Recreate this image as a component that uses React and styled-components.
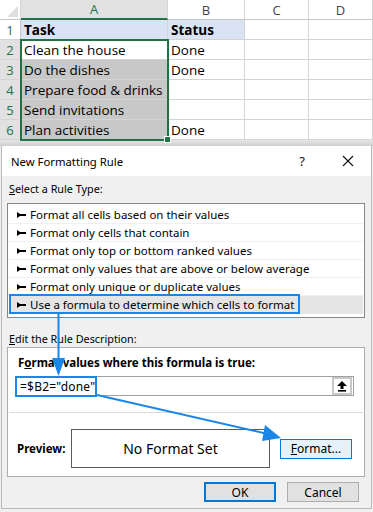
import React from "react";
import styled, { createGlobalStyle } from "styled-components";

const Global = createGlobalStyle`
  html, body { margin: 0; padding: 0; background: #fff; }
  * { box-sizing: border-box; }
`;

const Page = styled.div`
  position: relative;
  width: 373px;
  height: 512px;
  overflow: hidden;
  background: #f0f0f0;
  font-family: "Noto Sans", "Open Sans", sans-serif;
`;

/* ---------- Spreadsheet ---------- */
const Sheet = styled.div`
  position: relative;
  display: grid;
  grid-template-columns: 21px 147px 77px 64px 64px;
  grid-auto-rows: 20px;
  background: #fff;
  font-family: "Open Sans", "Noto Sans", sans-serif;
`;

const ColHead = styled.div`
  display: flex;
  align-items: center;
  justify-content: center;
  font-size: 13px;
  color: ${(p) => (p.$active ? "#217346" : "#444")};
  background: ${(p) => (p.$active ? "#e1e1e1" : "#fff")};
  border-right: 1px solid #d4d4d4;
  border-bottom: ${(p) => (p.$active ? "2px solid #217346" : "1px solid #c6c6c6")};
`;

const Corner = styled.div`
  position: relative;
  background: #fff;
  border-right: 1px solid #d4d4d4;
  border-bottom: 1px solid #c6c6c6;
  &::after {
    content: "";
    position: absolute;
    right: 2px;
    bottom: 2px;
    border-style: solid;
    border-width: 0 0 11px 11px;
    border-color: transparent transparent #dfdfdf transparent;
  }
`;

const RowHead = styled.div`
  display: flex;
  align-items: center;
  justify-content: center;
  font-size: 13px;
  color: #217346;
  background: ${(p) => (p.$active ? "#e1e1e1" : "#fff")};
  border-right: 1px solid #c6c6c6;
  border-bottom: 1px solid #d4d4d4;
`;

const Cell = styled.div`
  display: flex;
  align-items: center;
  padding-left: 3px;
  font-size: 13.5px;
  color: #000;
  white-space: nowrap;
  font-weight: ${(p) => (p.$bold ? 700 : 400)};
  background: ${(p) => p.$bg || "#fff"};
  border-right: 1px solid #d4d4d4;
  border-bottom: 1px solid #d4d4d4;
`;

const Selection = styled.div`
  position: absolute;
  left: 20px;
  top: 39px;
  width: 149px;
  height: 102px;
  border: 2px solid #217346;
  pointer-events: none;
  &::after {
    content: "";
    position: absolute;
    right: -4px;
    bottom: -4px;
    width: 5px;
    height: 5px;
    background: #217346;
    border: 1px solid #fff;
  }
`;

const SheetShadow = styled.div`
  height: 6px;
  background: linear-gradient(#e6e6e6, #cfcfcf);
`;

/* ---------- Dialog ---------- */
const Dialog = styled.div`
  height: 363px;
  margin: 0 1px;
  border-left: 1px solid #b9b9b9;
  border-right: 1px solid #b9b9b9;
  border-bottom: 1px solid #b9b9b9;
  background: #f0f0f0;
  display: flex;
  flex-direction: column;
  font-family: "Noto Sans", "Open Sans", sans-serif;
  font-size: 11.5px;
  color: #000;
`;

const TitleBar = styled.div`
  height: 30px;
  background: #fff;
  display: flex;
  align-items: center;
  padding-left: 9px;
  font-size: 11.3px;
`;

const TitleText = styled.div`
  flex: 1;
`;

const TitleBtn = styled.div`
  width: 46px;
  height: 30px;
  display: flex;
  align-items: center;
  justify-content: center;
  font-size: 13px;
  color: #111;
`;

const Body = styled.div`
  padding: 0 6px 0 5px;
  display: flex;
  flex-direction: column;
`;

const SectionLabel = styled.div`
  height: 16px;
  line-height: 16px;
  font-size: 10.8px;
  margin-top: ${(p) => p.$mt || 0}px;
  padding-left: 2px;
`;

const ListBox = styled.div`
  margin-top: 6px;
  height: 115px;
  background: #fff;
  border: 1px solid #828790;
  padding: 2px 1px 0 1px;
`;

const ListItem = styled.div`
  height: 18px;
  display: flex;
  align-items: center;
  padding-left: 8px;
  gap: 3px;
  border-bottom: 1px solid ${(p) => (p.$selected ? "transparent" : "#f0f0f0")};
  background: ${(p) => (p.$selected ? "#e5e5e5" : "#fff")};
  white-space: nowrap;
`;

const Highlight = styled.div`
  position: absolute;
  left: ${(p) => p.$l}px;
  top: ${(p) => p.$t}px;
  width: ${(p) => p.$w}px;
  height: ${(p) => p.$h}px;
  border: 2px solid #1a87e8;
  pointer-events: none;
`;

const DescBox = styled.div`
  height: 130px;
  background: #fff;
  border: 1px solid #adadad;
  display: flex;
  flex-direction: column;
`;

const DescTop = styled.div`
  padding: 8px 9px 0 7px;
  height: 65px;
  border-bottom: 1px solid #dcdcdc;
  margin: 0 1px;
`;

const BoldLabel = styled.div`
  height: 14px;
  line-height: 14px;
  font-weight: 700;
  padding-left: 2px;
  white-space: nowrap;
`;

const FormulaInput = styled.div`
  position: relative;
  margin-top: 6px;
  height: 20px;
  border: 1px solid #a0a0a0;
  background: #fff;
  display: flex;
  align-items: center;
  padding-left: 3px;
  font-size: 12px;
  letter-spacing: 0.2px;
`;

const CollapseBtn = styled.div`
  position: absolute;
  right: 1px;
  top: 0px;
  width: 20px;
  height: 18px;
  border: 2px solid #c8c8c8;
  background: #fff;
  display: flex;
  align-items: center;
  justify-content: center;
`;

const PreviewRow = styled.div`
  display: flex;
  align-items: center;
  padding: 16px 0 0 9px;
`;

const PreviewLabel = styled.div`
  width: 54px;
  font-weight: 700;
`;

const PreviewBox = styled.div`
  width: 199px;
  height: 39px;
  border: 1px solid #5a5a5a;
  display: flex;
  align-items: center;
  justify-content: center;
  font-size: 14px;
`;

const Button = styled.div`
  width: 72px;
  height: 20px;
  display: flex;
  align-items: center;
  justify-content: center;
  background: ${(p) => (p.$light ? "#e5f1fb" : "#e1e1e1")};
  border: ${(p) =>
    p.$default ? "2px solid #0078d7" : p.$light ? "1px solid #0078d7" : "1px solid #adadad"};
  font-size: 12px;
  margin-left: ${(p) => p.$ml || 0}px;
`;

const ButtonRow = styled.div`
  display: flex;
  justify-content: flex-end;
  gap: 11px;
  padding-right: 6px;
  margin-top: 5px;
`;

const Annotations = styled.svg`
  position: absolute;
  left: 0;
  top: 0;
  pointer-events: none;
`;

const Pointer = () => (
  <svg width="10" height="8" viewBox="0 0 10 8">
    <path d="M0 1 L4.5 4 L0 7 Z" fill="#000" />
    <rect x="0" y="3" width="9" height="2" fill="#000" />
  </svg>
);

const UpArrow = () => (
  <svg width="10" height="11" viewBox="0 0 10 11">
    <path d="M5 0 L10 5 L6.5 5 L6.5 8 L3.5 8 L3.5 5 L0 5 Z" fill="#000" />
    <rect x="1" y="9" width="8" height="1.6" fill="#000" />
  </svg>
);

const cols = ["A", "B", "C", "D"];
const rows = [
  ["Task", "Status"],
  ["Clean the house", "Done"],
  ["Do the dishes", "Done"],
  ["Prepare food & drinks", ""],
  ["Send invitations", ""],
  ["Plan activities", "Done"],
];

const rules = [
  "Format all cells based on their values",
  "Format only cells that contain",
  "Format only top or bottom ranked values",
  "Format only values that are above or below average",
  "Format only unique or duplicate values",
  "Use a formula to determine which cells to format",
];

export default function App() {
  return (
    <Page>
      <Global />
      <Sheet>
        <Corner />
        {cols.map((c) => (
          <ColHead key={c} $active={c === "A"}>
            {c}
          </ColHead>
        ))}
        {rows.map((r, i) => (
          <React.Fragment key={i}>
            <RowHead $active={i > 0}>{i + 1}</RowHead>
            <Cell $bold={i === 0} $bg={i === 0 ? "#dae3f3" : i > 1 ? "#c8c8c8" : "#fff"}>
              {r[0]}
            </Cell>
            <Cell $bold={i === 0} $bg={i === 0 ? "#dae3f3" : "#fff"}>
              {r[1]}
            </Cell>
            <Cell />
            <Cell />
          </React.Fragment>
        ))}
        <Selection />
      </Sheet>
      <SheetShadow />
      <Dialog>
        <TitleBar>
          <TitleText>New Formatting Rule</TitleText>
          <TitleBtn>?</TitleBtn>
          <TitleBtn>
            <svg width="12" height="12" viewBox="0 0 12 12">
              <path d="M1 1 L11 11 M11 1 L1 11" stroke="#111" strokeWidth="1.1" />
            </svg>
          </TitleBtn>
        </TitleBar>
        <Body>
          <SectionLabel $mt={5}>
            <u>S</u>elect a Rule Type:
          </SectionLabel>
          <ListBox>
            {rules.map((r, i) => (
              <ListItem key={i} $selected={i === 5}>
                <Pointer />
                {r}
              </ListItem>
            ))}
          </ListBox>
          <SectionLabel $mt={13}>
            <u>E</u>dit the Rule Description:
          </SectionLabel>
          <DescBox>
            <DescTop>
              <BoldLabel>
                F<u>o</u>rmat values where this formula is true:
              </BoldLabel>
              <FormulaInput>
                =$B2="done"
                <CollapseBtn>
                  <UpArrow />
                </CollapseBtn>
              </FormulaInput>
            </DescTop>
            <PreviewRow>
              <PreviewLabel>Preview:</PreviewLabel>
              <PreviewBox>No Format Set</PreviewBox>
              <Button $light $ml={10}>
                <u>F</u>ormat...
              </Button>
            </PreviewRow>
          </DescBox>
          <ButtonRow>
            <Button $default>OK</Button>
            <Button>Cancel</Button>
          </ButtonRow>
        </Body>
      </Dialog>
      <Highlight $l={9} $t={294} $w={291} $h={20} />
      <Highlight $l={15} $t={376} $w={82} $h={21} />
      <Annotations width="373" height="512" viewBox="0 0 373 512">
        <line x1="58.5" y1="314" x2="58.5" y2="362" stroke="#1a87e8" strokeWidth="2" />
        <path d="M52 358 L65 358 L58.5 376 Z" fill="#1a87e8" />
        <line x1="97" y1="395" x2="268" y2="434" stroke="#1a87e8" strokeWidth="2" />
        <path d="M265 425 L281 438 L262 441 Z" fill="#1a87e8" />
      </Annotations>
    </Page>
  );
}
